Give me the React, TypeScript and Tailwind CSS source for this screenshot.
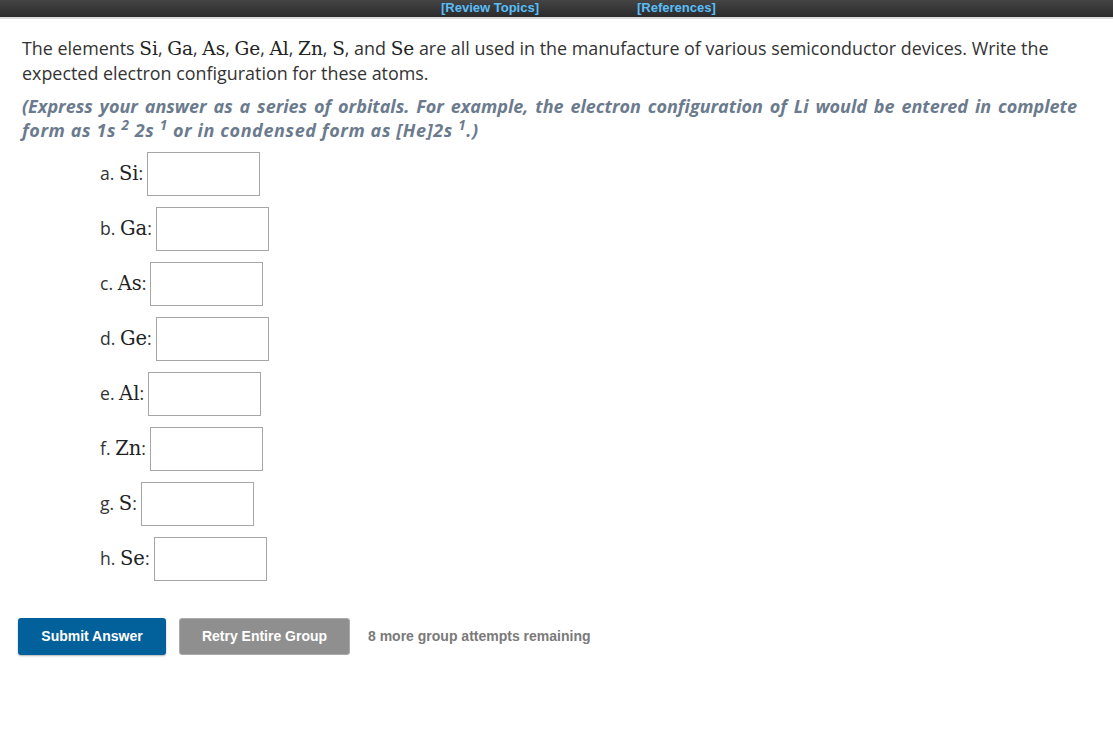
const items = [
  { l: "a.", s: "Si" },
  { l: "b.", s: "Ga" },
  { l: "c.", s: "As" },
  { l: "d.", s: "Ge" },
  { l: "e.", s: "Al" },
  { l: "f.", s: "Zn" },
  { l: "g.", s: "S" },
  { l: "h.", s: "Se" },
];

const serif = "font-['DejaVu_Serif','Liberation_Serif',serif]";

function Sym({ children, big }: { children: string; big?: boolean }) {
  return <span className={`${serif} ${big ? "text-[19.5px]" : "text-[18.5px]"} text-[#222]`}>{children}</span>;
}

export default function App() {
  const elems = ["Si", "Ga", "As", "Ge", "Al", "Zn", "S"];
  return (
    <div className="min-h-[729px] bg-white font-['Open_Sans',sans-serif] text-[#333]">
      <div className="h-[19px] bg-gradient-to-b from-[#454545] to-[#2b2b2b] border-b-2 border-[#dcdcdc] flex pl-[441px] gap-[98px] font-['Liberation_Sans',sans-serif] text-[13px] font-bold leading-[15px] text-[#62bbec] [text-shadow:0_0_1px_#1d4c6b]">
        <a>[Review Topics]</a>
        <a>[References]</a>
      </div>
      <div className="px-[22px] pt-[17px]">
        <p className="text-[17.9px] leading-[24px]">
          The elements{" "}
          {elems.map((e) => (
            <span key={e}>
              <Sym>{e}</Sym>,{" "}
            </span>
          ))}
          and <Sym>Se</Sym> are all used in the manufacture of various semiconductor devices. Write the expected
          electron configuration for these atoms.
        </p>
        <p className="mt-[9px] text-[18px] leading-[24px] italic font-bold text-[#6b7b8d] text-justify pr-[14px]">
          (Express your answer as a series of orbitals. For example, the electron configuration of Li would be
          entered in complete{" "}
          <span className="tracking-[0.6px]">
            form as 1s <sup>2</sup> 2s <sup>1</sup> or in condensed form as [He]2s <sup>1</sup>.)
          </span>
        </p>
        <div className="mt-[10px] pl-[78px] flex flex-col gap-[11px]">
          {items.map((it) => (
            <div key={it.s} className="flex items-center gap-[4px] h-[44px]">
              <span className="text-[17.6px]">
                {it.l} <Sym big>{it.s}</Sym>:
              </span>
              <input className="w-[113px] h-[44px] border border-[#a6a6a6] outline-none" />
            </div>
          ))}
        </div>
        <div className="mt-[37px] ml-[-4px] flex items-center gap-[13px] font-['Liberation_Sans',sans-serif] text-[14px] font-bold">
          <button className="w-[148px] h-[37px] rounded-[3px] bg-[#02609b] text-white shadow-[0_1px_2px_rgba(0,0,0,0.3)]">
            Submit Answer
          </button>
          <button className="w-[171px] h-[37px] rounded-[3px] bg-[#8f8f8f] border border-[#aaa] text-white">
            Retry Entire Group
          </button>
          <span className="ml-[5px] text-[#7a7a7a]">8 more group attempts remaining</span>
        </div>
      </div>
    </div>
  );
}
